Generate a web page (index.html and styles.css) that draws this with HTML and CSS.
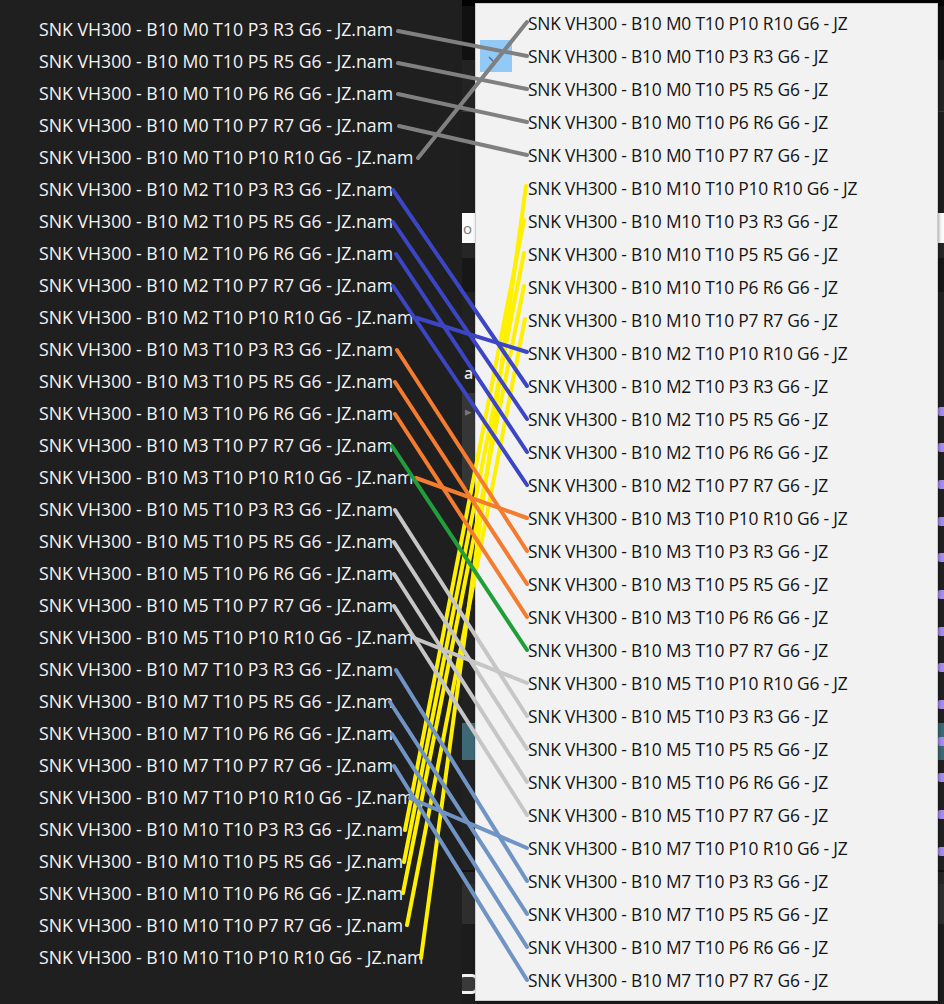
FILE: index.html
```html
<!DOCTYPE html>
<html lang="en">
<head>
<meta charset="utf-8">
<title>Capture mapping</title>
<link rel="stylesheet" href="styles.css">
</head>
<body>
<div class="screen">
  <section class="files">
    <ul class="file-list">
      <li>SNK VH300 - B10 M0 T10 P3 R3 G6 - JZ.nam</li>
      <li>SNK VH300 - B10 M0 T10 P5 R5 G6 - JZ.nam</li>
      <li>SNK VH300 - B10 M0 T10 P6 R6 G6 - JZ.nam</li>
      <li>SNK VH300 - B10 M0 T10 P7 R7 G6 - JZ.nam</li>
      <li>SNK VH300 - B10 M0 T10 P10 R10 G6 - JZ.nam</li>
      <li>SNK VH300 - B10 M2 T10 P3 R3 G6 - JZ.nam</li>
      <li>SNK VH300 - B10 M2 T10 P5 R5 G6 - JZ.nam</li>
      <li>SNK VH300 - B10 M2 T10 P6 R6 G6 - JZ.nam</li>
      <li>SNK VH300 - B10 M2 T10 P7 R7 G6 - JZ.nam</li>
      <li>SNK VH300 - B10 M2 T10 P10 R10 G6 - JZ.nam</li>
      <li>SNK VH300 - B10 M3 T10 P3 R3 G6 - JZ.nam</li>
      <li>SNK VH300 - B10 M3 T10 P5 R5 G6 - JZ.nam</li>
      <li>SNK VH300 - B10 M3 T10 P6 R6 G6 - JZ.nam</li>
      <li>SNK VH300 - B10 M3 T10 P7 R7 G6 - JZ.nam</li>
      <li>SNK VH300 - B10 M3 T10 P10 R10 G6 - JZ.nam</li>
      <li>SNK VH300 - B10 M5 T10 P3 R3 G6 - JZ.nam</li>
      <li>SNK VH300 - B10 M5 T10 P5 R5 G6 - JZ.nam</li>
      <li>SNK VH300 - B10 M5 T10 P6 R6 G6 - JZ.nam</li>
      <li>SNK VH300 - B10 M5 T10 P7 R7 G6 - JZ.nam</li>
      <li>SNK VH300 - B10 M5 T10 P10 R10 G6 - JZ.nam</li>
      <li>SNK VH300 - B10 M7 T10 P3 R3 G6 - JZ.nam</li>
      <li>SNK VH300 - B10 M7 T10 P5 R5 G6 - JZ.nam</li>
      <li>SNK VH300 - B10 M7 T10 P6 R6 G6 - JZ.nam</li>
      <li>SNK VH300 - B10 M7 T10 P7 R7 G6 - JZ.nam</li>
      <li>SNK VH300 - B10 M7 T10 P10 R10 G6 - JZ.nam</li>
      <li>SNK VH300 - B10 M10 T10 P3 R3 G6 - JZ.nam</li>
      <li>SNK VH300 - B10 M10 T10 P5 R5 G6 - JZ.nam</li>
      <li>SNK VH300 - B10 M10 T10 P6 R6 G6 - JZ.nam</li>
      <li>SNK VH300 - B10 M10 T10 P7 R7 G6 - JZ.nam</li>
      <li>SNK VH300 - B10 M10 T10 P10 R10 G6 - JZ.nam</li>
    </ul>
  </section>

  <section class="app">
    <div class="band band-top"></div>
    <div class="band band-head"></div>
    <div class="band band-tabs"></div>
    <div class="band band-body"></div>
    <div class="search"><span class="search-text">o</span></div>
    <div class="band band-gap"></div>
    <div class="band band-dark"></div>
    <div class="band band-mid"></div>
    <div class="label-row"><span class="label">a</span></div>
    <ul class="model-rows">
      <li class="model-row hover"><span class="caret">&#9656;</span><span class="tick"></span></li>
      <li class="model-row hover"><span class="caret"></span><span class="tick"></span></li>
      <li class="model-row hover-end"><span class="caret"></span><span class="tick"></span></li>
      <li class="model-row"><span class="caret"></span><span class="tick"></span></li>
      <li class="model-row"><span class="caret"></span><span class="tick"></span></li>
      <li class="model-row"><span class="caret"></span><span class="tick"></span></li>
      <li class="model-row"><span class="caret"></span><span class="tick"></span></li>
      <li class="model-row"><span class="caret"></span><span class="tick"></span></li>
      <li class="model-row"><span class="caret"></span><span class="tick"></span></li>
      <li class="model-row selected"><span class="caret"></span><span class="tick"></span></li>
      <li class="model-row"><span class="caret"></span><span class="tick"></span></li>
      <li class="model-row"><span class="caret"></span><span class="tick"></span></li>
      <li class="model-row"><span class="caret"></span><span class="tick"></span></li>
    </ul>
    <div class="band band-foot"></div>
    <div class="band band-foot2"></div>
    <div class="toolbar"><span class="tool-icon"></span></div>
  </section>

  <div class="menu">
    <ul class="menu-list">
      <li class="menu-item"><span class="check"></span><span>SNK VH300 - B10 M0 T10 P10 R10 G6 - JZ</span></li>
      <li class="menu-item"><span class="check on"><svg viewBox="0 0 32 32" width="32" height="32"><polyline points="9,17 14,22 23,12" fill="none" stroke="#4f7292" stroke-width="1.5"/></svg></span><span>SNK VH300 - B10 M0 T10 P3 R3 G6 - JZ</span></li>
      <li class="menu-item"><span class="check"></span><span>SNK VH300 - B10 M0 T10 P5 R5 G6 - JZ</span></li>
      <li class="menu-item"><span class="check"></span><span>SNK VH300 - B10 M0 T10 P6 R6 G6 - JZ</span></li>
      <li class="menu-item"><span class="check"></span><span>SNK VH300 - B10 M0 T10 P7 R7 G6 - JZ</span></li>
      <li class="menu-item"><span class="check"></span><span>SNK VH300 - B10 M10 T10 P10 R10 G6 - JZ</span></li>
      <li class="menu-item"><span class="check"></span><span>SNK VH300 - B10 M10 T10 P3 R3 G6 - JZ</span></li>
      <li class="menu-item"><span class="check"></span><span>SNK VH300 - B10 M10 T10 P5 R5 G6 - JZ</span></li>
      <li class="menu-item"><span class="check"></span><span>SNK VH300 - B10 M10 T10 P6 R6 G6 - JZ</span></li>
      <li class="menu-item"><span class="check"></span><span>SNK VH300 - B10 M10 T10 P7 R7 G6 - JZ</span></li>
      <li class="menu-item"><span class="check"></span><span>SNK VH300 - B10 M2 T10 P10 R10 G6 - JZ</span></li>
      <li class="menu-item"><span class="check"></span><span>SNK VH300 - B10 M2 T10 P3 R3 G6 - JZ</span></li>
      <li class="menu-item"><span class="check"></span><span>SNK VH300 - B10 M2 T10 P5 R5 G6 - JZ</span></li>
      <li class="menu-item"><span class="check"></span><span>SNK VH300 - B10 M2 T10 P6 R6 G6 - JZ</span></li>
      <li class="menu-item"><span class="check"></span><span>SNK VH300 - B10 M2 T10 P7 R7 G6 - JZ</span></li>
      <li class="menu-item"><span class="check"></span><span>SNK VH300 - B10 M3 T10 P10 R10 G6 - JZ</span></li>
      <li class="menu-item"><span class="check"></span><span>SNK VH300 - B10 M3 T10 P3 R3 G6 - JZ</span></li>
      <li class="menu-item"><span class="check"></span><span>SNK VH300 - B10 M3 T10 P5 R5 G6 - JZ</span></li>
      <li class="menu-item"><span class="check"></span><span>SNK VH300 - B10 M3 T10 P6 R6 G6 - JZ</span></li>
      <li class="menu-item"><span class="check"></span><span>SNK VH300 - B10 M3 T10 P7 R7 G6 - JZ</span></li>
      <li class="menu-item"><span class="check"></span><span>SNK VH300 - B10 M5 T10 P10 R10 G6 - JZ</span></li>
      <li class="menu-item"><span class="check"></span><span>SNK VH300 - B10 M5 T10 P3 R3 G6 - JZ</span></li>
      <li class="menu-item"><span class="check"></span><span>SNK VH300 - B10 M5 T10 P5 R5 G6 - JZ</span></li>
      <li class="menu-item"><span class="check"></span><span>SNK VH300 - B10 M5 T10 P6 R6 G6 - JZ</span></li>
      <li class="menu-item"><span class="check"></span><span>SNK VH300 - B10 M5 T10 P7 R7 G6 - JZ</span></li>
      <li class="menu-item"><span class="check"></span><span>SNK VH300 - B10 M7 T10 P10 R10 G6 - JZ</span></li>
      <li class="menu-item"><span class="check"></span><span>SNK VH300 - B10 M7 T10 P3 R3 G6 - JZ</span></li>
      <li class="menu-item"><span class="check"></span><span>SNK VH300 - B10 M7 T10 P5 R5 G6 - JZ</span></li>
      <li class="menu-item"><span class="check"></span><span>SNK VH300 - B10 M7 T10 P6 R6 G6 - JZ</span></li>
      <li class="menu-item"><span class="check"></span><span>SNK VH300 - B10 M7 T10 P7 R7 G6 - JZ</span></li>
    </ul>
  </div>

  <!-- connectors from each file to its slot in the menu -->
  <svg class="links" width="944" height="1004" viewBox="0 0 944 1004">
    <g class="link m0">
      <line x1="398" y1="31" x2="527" y2="56"/>
      <line x1="398" y1="63" x2="527" y2="89"/>
      <line x1="398" y1="94" x2="527" y2="122"/>
      <line x1="399" y1="126" x2="527" y2="155"/>
      <line x1="418" y1="158" x2="527" y2="22"/>
    </g>
    <g class="link m10">
      <line x1="405" y1="830" x2="524" y2="220"/>
      <line x1="404" y1="862" x2="524" y2="253"/>
      <line x1="403" y1="893" x2="524" y2="286"/>
      <line x1="407" y1="925" x2="525" y2="319"/>
      <line x1="421" y1="958" x2="526" y2="186"/>
    </g>
    <g class="link m2">
      <line x1="393" y1="190" x2="527" y2="386"/>
      <line x1="393" y1="222" x2="527" y2="419"/>
      <line x1="396" y1="254" x2="527" y2="452"/>
      <line x1="393" y1="286" x2="527" y2="485"/>
      <line x1="417" y1="318" x2="527" y2="352"/>
    </g>
    <g class="link m3">
      <line x1="397" y1="350" x2="527" y2="551"/>
      <line x1="395" y1="382" x2="527" y2="584"/>
      <line x1="395" y1="414" x2="527" y2="617"/>
      <line x1="416" y1="478" x2="527" y2="518"/>
    </g>
    <g class="link m3-p7">
      <line x1="392" y1="446" x2="527" y2="650"/>
    </g>
    <g class="link m5">
      <line x1="395" y1="510" x2="527" y2="716"/>
      <line x1="394" y1="542" x2="527" y2="749"/>
      <line x1="394" y1="574" x2="527" y2="782"/>
      <line x1="394" y1="606" x2="527" y2="815"/>
      <line x1="414" y1="638" x2="527" y2="683"/>
    </g>
    <g class="link m7">
      <line x1="396" y1="670" x2="527" y2="881"/>
      <line x1="390" y1="702" x2="527" y2="914"/>
      <line x1="392" y1="734" x2="527" y2="947"/>
      <line x1="394" y1="766" x2="527" y2="980"/>
      <line x1="410" y1="798" x2="527" y2="848"/>
    </g>
  </svg>
</div>
</body>
</html>
```

FILE: styles.css
```css
* {
  box-sizing: border-box;
}

html,
body {
  margin: 0;
  padding: 0;
  background: #1f1f1f;
}

ul {
  list-style: none;
  margin: 0;
  padding: 0;
}

.screen {
  position: relative;
  width: 944px;
  height: 1004px;
  overflow: hidden;
  display: flex;
  font-family: "Open Sans", "Noto Sans", sans-serif;
}

/* left: file picker list */
.files {
  width: 462px;
  flex: none;
  background: #1f1f1f;
  padding: 13px 0 0 39px;
}

.file-list li {
  height: 32px;
  line-height: 32px;
  font-size: 17.7px;
  color: #f3f3f3;
  white-space: nowrap;
}

/* right: host application behind the menu */
.app {
  flex: 1;
  display: flex;
  flex-direction: column;
  background: #212121;
  overflow: hidden;
}

.band {
  flex: none;
}

.band-top {
  height: 6px;
  background: #030303;
}

.band-head {
  height: 54px;
  background: #111111;
}

.band-tabs {
  height: 52px;
  background: #232323;
  border-bottom: 1px solid #3a3a3a;
}

.band-body {
  height: 101px;
  background: #1e1e1e;
}

.search {
  height: 30px;
  background: #fbfbfb;
  font-size: 15px;
  line-height: 30px;
  color: #7a7a7a;
  padding-left: 1px;
}

.band-gap {
  height: 15px;
  background: #262626;
}

.band-dark {
  height: 34px;
  background: #171717;
}

.band-mid {
  height: 60px;
  background: #222222;
}

.label-row {
  height: 41px;
  display: flex;
  align-items: center;
  background: #202020;
}

.label {
  margin-left: 2px;
  font-size: 16px;
  font-weight: 600;
  color: #e8e8e8;
}

.model-rows {
  flex: none;
}

.model-row {
  height: 36.67px;
  display: flex;
  align-items: center;
  justify-content: space-between;
}

.caret {
  width: 13px;
  height: 100%;
  display: flex;
  align-items: center;
  justify-content: center;
  color: #777;
  font-size: 13px;
}

.model-row.hover .caret,
.model-row.hover-end .caret {
  background: #363636;
}

.model-row.hover-end .caret {
  height: 60%;
  align-self: flex-start;
}

.model-row.selected {
  background: #3d6874;
}

.tick {
  width: 8px;
  height: 9px;
  margin-right: -2px;
  border-radius: 2px;
  background: #a58cf0;
}

.band-foot {
  height: 14px;
  border-top: 2px solid #121212;
  background: #262626;
}

.band-foot2 {
  height: 40px;
  background: #2e2e2e;
}

.toolbar {
  flex: 1;
  background: #1c1c1c;
  padding-top: 50px;
}

.tool-icon {
  display: block;
  width: 20px;
  height: 20px;
  margin-left: -4px;
  border-radius: 6px;
  border: 3px solid #f2f2f2;
  background: #3a3a3a;
}

/* dropdown menu over the application */
.menu {
  position: absolute;
  left: 475px;
  top: 3px;
  width: 463px;
  height: 998px;
  background: #f2f2f2;
  border: 1px solid #cfcfcf;
  box-shadow: 1px 1px 3px rgba(0, 0, 0, 0.35);
  padding: 2px 0 0 4px;
}

.menu-item {
  height: 33px;
  display: flex;
  align-items: center;
  gap: 16px;
  font-size: 17.4px;
  letter-spacing: -0.2px;
  color: #141414;
  white-space: nowrap;
}

.check {
  width: 32px;
  height: 33px;
  flex: none;
}

.check.on {
  height: 32px;
  background: #91c9f7;
}

.check svg {
  display: block;
}

/* connector overlay */
.links {
  position: absolute;
  left: 0;
  top: 0;
  pointer-events: none;
}

.link line {
  stroke-width: 4;
  stroke-linecap: round;
}

.m0 line {
  stroke: #808080;
}

.m2 line {
  stroke: #3c46c4;
}

.m3 line {
  stroke: #f47c30;
}

.m3-p7 line {
  stroke: #1f9e3a;
}

.m5 line {
  stroke: #c6c6c6;
}

.m7 line {
  stroke: #7094c4;
}

.m10 line {
  stroke: #fff000;
}
```
